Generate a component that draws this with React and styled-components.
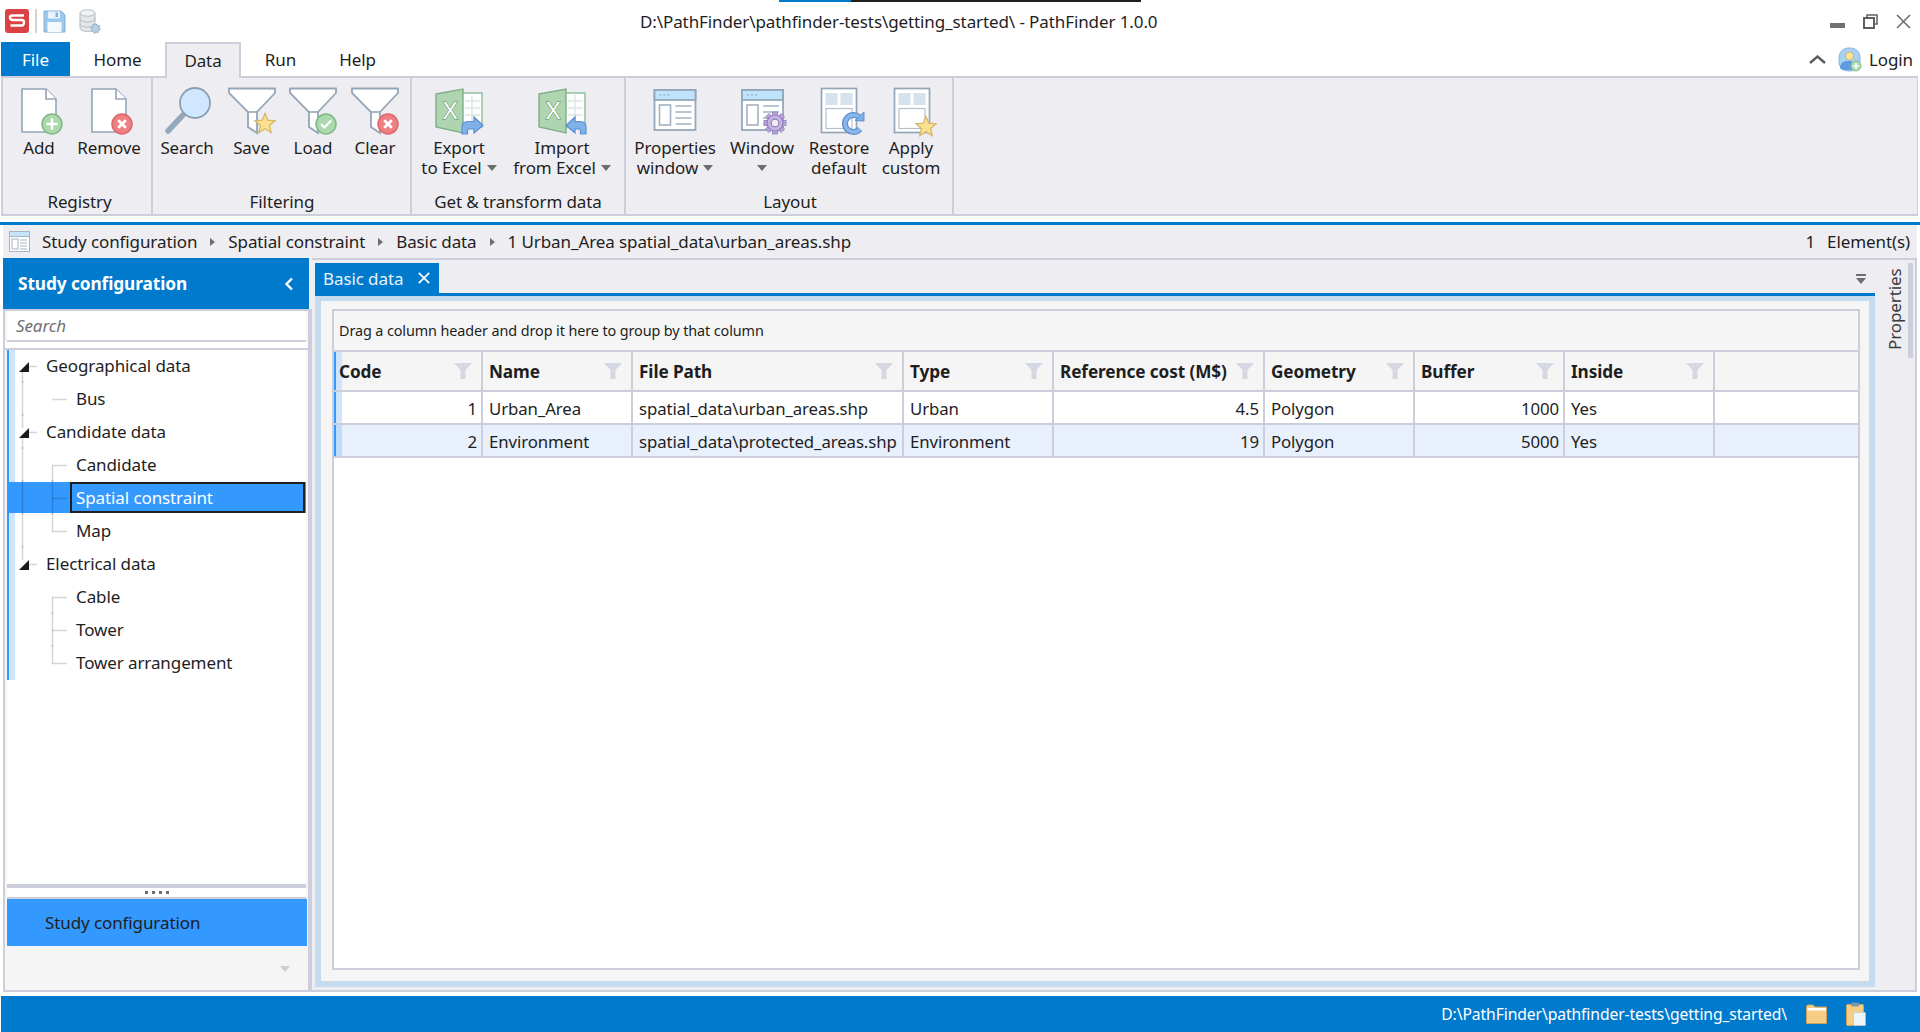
import styled, { createGlobalStyle } from 'styled-components'

const GlobalStyle = createGlobalStyle`
    html, body {
        margin: 0;
        padding: 0;
        background: #fff;
    }
    * {
        box-sizing: border-box;
    }
`

const FONT = `"Noto Sans", "Open Sans", sans-serif`

/* ---------- icons ---------- */

const Badge = ({ kind, cx = 43, cy = 38 }) => {
    if (kind === 'star') return <Star cx={cx} cy={cy} />
    const fill = kind === 'remove' ? '#f07f83' : '#acd8ae'
    const stroke = kind === 'remove' ? '#d9676b' : '#7fb884'
    return (
        <g>
            <circle cx={cx} cy={cy} r="10" fill={fill} stroke={stroke} strokeWidth="1.5" />
            {kind === 'add' && <path d={`M${cx - 5.5} ${cy}H${cx + 5.5}M${cx} ${cy - 5.5}V${cy + 5.5}`} stroke="#fff" strokeWidth="2.6" />}
            {kind === 'remove' && <path d={`M${cx - 3.8} ${cy - 3.8}L${cx + 3.8} ${cy + 3.8}M${cx + 3.8} ${cy - 3.8}L${cx - 3.8} ${cy + 3.8}`} stroke="#fff" strokeWidth="2.8" />}
            {kind === 'check' && <path d={`M${cx - 5} ${cy}L${cx - 1.5} ${cy + 3.5}L${cx + 5} ${cy - 3.5}`} stroke="#fff" strokeWidth="2.2" fill="none" />}
        </g>
    )
}

const Star = ({ cx, cy, r = 10.5 }) => {
    const pts = []
    for (let i = 0; i < 10; i++) {
        const rad = i % 2 === 0 ? r : r * 0.45
        const a = -Math.PI / 2 + (i * Math.PI) / 5
        pts.push(`${(cx + rad * Math.cos(a)).toFixed(1)},${(cy + rad * Math.sin(a)).toFixed(1)}`)
    }
    return <polygon points={pts.join(' ')} fill="#fbe08e" stroke="#d4b76a" strokeWidth="1.3" />
}

const IconBox = ({ children }) => (
    <svg width="60" height="52" viewBox="0 0 60 52">{children}</svg>
)

const DocIcon = ({ badge }) => (
    <IconBox>
        <path d="M13 3H37L47 13V46H13Z" fill="#fff" stroke="#94a5b7" strokeWidth="1.6" />
        <path d="M37 3V13H47" fill="#fff" stroke="#94a5b7" strokeWidth="1.6" />
        <Badge kind={badge} />
    </IconBox>
)

const SearchIcon = () => (
    <IconBox>
        <path d="M26 29L11 45" stroke="#94a9ba" strokeWidth="5.5" strokeLinecap="round" />
        <circle cx="38" cy="17" r="15" fill="#cfe8ff" stroke="#8b9fb3" strokeWidth="1.8" />
    </IconBox>
)

const FunnelIcon = ({ badge }) => (
    <IconBox>
        <path d="M7 2.5H53V7L35 26V47L26 41V26L7 7Z" fill="#fff" stroke="#94a5b7" strokeWidth="1.8" />
        <path d="M26 26H35" stroke="#94a5b7" strokeWidth="1.6" />
        <Badge kind={badge} />
    </IconBox>
)

const ExcelIcon = ({ direction }) => (
    <IconBox>
        <rect x="30" y="7" width="23" height="34" fill="#fff" stroke="#8fc2a0" strokeWidth="1.5" />
        <path d="M36 15H51M36 22H51M36 29H51M43 9V38" stroke="#dce8e2" strokeWidth="1.5" />
        <path d="M7 8L34 3V47L7 41Z" fill="#afd5b0" stroke="#7fae8a" strokeWidth="1.4" />
        <ExcelMark x="21" y="33">X</ExcelMark>
        {direction === 'out'
            ? <path d="M33 48V41Q33 35.500 39 35.500H45V31L54 39.500L45 47V43H40Q38.500 43 38.500 45V48Z" fill="#7fb0e8" stroke="#5a8fd0" strokeWidth="1.2" />
            : <path d="M54 48V41Q54 35.500 48 35.500H43V31L34 39.500L43 47V43H47Q48.500 43 48.500 45V48Z" fill="#7fb0e8" stroke="#5a8fd0" strokeWidth="1.2" />}
    </IconBox>
)

const ExcelMark = styled.text`
    font-family: "Liberation Sans", sans-serif;
    font-size: 23px;
    fill: #fff;
    stroke: #4f8a5c;
    stroke-width: 1px;
    paint-order: stroke;
    text-anchor: middle;
`

const WindowBody = ({ x }) => (
    <g>
        <rect x={x} y="4" width="41" height="40" fill="#fff" stroke="#93a7ba" strokeWidth="1.8" />
        <rect x={x} y="4" width="41" height="10" fill="#bfe3fb" stroke="#93a7ba" strokeWidth="1.8" />
        <path d={`M${x + 5} 9H${x + 7}M${x + 9} 9H${x + 11}M${x + 13} 9H${x + 15}`} stroke="#8ea4b8" strokeWidth="1.2" />
        <rect x={x + 5} y="19" width="11" height="20" fill="#fff" stroke="#a2b2c1" strokeWidth="1.6" />
        <path d={`M${x + 21} 20H${x + 37}M${x + 21} 26H${x + 37}M${x + 21} 32H${x + 37}M${x + 21} 38H${x + 37}`} stroke="#a2b2c1" strokeWidth="1.6" />
    </g>
)

const PropertiesIcon = () => (
    <IconBox>
        <WindowBody x={9.500} />
    </IconBox>
)

const WindowIcon = () => {
    const teeth = [0, 45, 90, 135].map(a => (
        <rect key={a} x="40.500" y="26" width="5" height="22" fill="#b9a6d6" stroke="#917fc0" strokeWidth="0.8" transform={`rotate(${a} 43 37)`} />
    ))
    return (
        <IconBox>
            <WindowBody x={10} />
            {teeth}
            <circle cx="43" cy="37" r="8" fill="#c3b3df" stroke="#917fc0" strokeWidth="1.2" />
            <circle cx="43" cy="37" r="3.800" fill="#eeeef2" stroke="#917fc0" strokeWidth="1.2" />
        </IconBox>
    )
}

const LayoutDoc = ({ x }) => (
    <g>
        <rect x={x} y="2.500" width="35" height="44" fill="#fff" stroke="#94a5b7" strokeWidth="1.700" />
        <rect x={x + 4} y="7" width="12" height="12" fill="#d6e3ee" />
        <rect x={x + 19} y="7" width="12" height="12" fill="#d6e3ee" />
        <rect x={x + 4.500} y="22.500" width="26" height="20" fill="#fff" stroke="#b4c1cd" strokeWidth="1.200" />
    </g>
)

const RestoreIcon = () => (
    <IconBox>
        <LayoutDoc x={12.500} />
        <path d="M50 31A8.500 8.500 0 1 0 51 43" fill="none" stroke="#5a8fd0" strokeWidth="6" />
        <path d="M50 31A8.500 8.500 0 1 0 51 43" fill="none" stroke="#8ab6ea" strokeWidth="3.600" />
        <path d="M46 34.500L55 35V26Z" fill="#7fb0e8" stroke="#5a8fd0" strokeWidth="1" />
    </IconBox>
)

const ApplyIcon = () => (
    <IconBox>
        <LayoutDoc x={13.500} />
        <Star cx={45} cy={41} />
    </IconBox>
)

const LogoIcon = () => (
    <svg width="24" height="24" viewBox="0 0 24 24">
        <rect width="24" height="24" rx="3" fill="#dc4146" />
        <path d="M19 6.500H7.500Q5 6.500 5 8.500T7.500 11H17Q19 11 19 13.500T17 16.500H5.500" fill="none" stroke="#fff" strokeWidth="2.400" />
    </svg>
)

const SaveIcon = () => (
    <svg width="23" height="23" viewBox="0 0 23 23">
        <path d="M1 1H18L22 5V22H1Z" fill="#9cc8ec" stroke="#7fb0da" />
        <rect x="5" y="1.500" width="12" height="7" fill="#e8f3fb" />
        <rect x="12.500" y="2.500" width="2.500" height="4.500" fill="#7fb0da" />
        <rect x="4.500" y="12" width="14" height="10" fill="#f4f9fd" />
    </svg>
)

const DatabaseIcon = () => (
    <svg width="22" height="25" viewBox="0 0 22 25">
        <path d="M1 4V19C1 21 4 22.500 8.500 22.500S16 21 16 19V4Z" fill="#e4e7ea" stroke="#b5babe" />
        <ellipse cx="8.500" cy="4" rx="7.500" ry="3.200" fill="#f1f2f4" stroke="#b5babe" />
        <path d="M1 9.500C1 11.500 4 13 8.500 13S16 11.500 16 9.500M1 14.500C1 16.500 4 18 8.500 18S16 16.500 16 14.500" fill="none" stroke="#b5babe" />
        <circle cx="16.500" cy="19.500" r="4.200" fill="#b6cfe2" stroke="#93b3cc" strokeWidth="1.800" strokeDasharray="2 1.200" />
    </svg>
)

const MinimizeIcon = () => (
    <svg width="15" height="15" viewBox="0 0 15 15"><rect y="9" width="15" height="5" fill="#717171" /></svg>
)

const RestoreWindowIcon = () => (
    <svg width="15" height="15" viewBox="0 0 15 15">
        <path d="M4 3V1H14V10H11.500" fill="none" stroke="#5f5f5f" strokeWidth="1.500" />
        <rect x="1" y="4" width="10" height="10" fill="none" stroke="#5f5f5f" strokeWidth="2" />
    </svg>
)

const CloseIcon = ({ size = 15, color = '#6a6a6a', weight = 1.500 }) => (
    <svg width={size} height={size} viewBox="0 0 15 15">
        <path d="M1 1L14 14M14 1L1 14" stroke={color} strokeWidth={weight} />
    </svg>
)

const ChevronUp = () => (
    <svg width="17" height="9" viewBox="0 0 17 9"><path d="M1 8L8.500 1.500L16 8" fill="none" stroke="#5c5c5c" strokeWidth="2.400" /></svg>
)

const UserIcon = () => (
    <svg width="24" height="25" viewBox="0 0 24 25">
        <rect x="1" y="1" width="21" height="23" rx="9" fill="#a7d0f2" stroke="#8cb8dc" />
        <circle cx="11.500" cy="9" r="4" fill="#fbe7a0" stroke="#cdb568" />
        <path d="M2 20C3 14 8 14 11.500 14S16 16 16 23H6Q2 23 2 20Z" fill="#5e9be0" />
        <circle cx="18" cy="19" r="5" fill="#acd8ae" stroke="#8cc492" />
        <path d="M15 19H21M18 16V22" stroke="#fff" strokeWidth="1.600" />
    </svg>
)

const PanelIcon = () => (
    <svg width="21" height="21" viewBox="0 0 21 21">
        <rect x="0.500" y="0.500" width="20" height="20" fill="#fff" stroke="#a6b5c3" />
        <rect x="0.500" y="0.500" width="20" height="5" fill="#c5e5fb" stroke="#a6b5c3" />
        <rect x="3" y="8" width="6" height="10" fill="#fff" stroke="#a6b5c3" />
        <path d="M11 9H18M11 12H18M11 15H18M11 18H18" stroke="#a6b5c3" />
    </svg>
)

const FilterGlyph = () => (
    <svg width="18" height="16" viewBox="0 0 18 16"><path d="M0 0H18L11.500 7V16H6.500V7Z" fill="#d5d7e3" /></svg>
)

const FolderIcon = () => (
    <svg width="21" height="20" viewBox="0 0 21 20">
        <path d="M0.500 2.500Q0.500 1 2 1H7L9 3H20.500V19.500H0.500Z" fill="#f5cd85" stroke="#c9a461" />
        <rect x="1.500" y="4" width="18.500" height="2.500" fill="#fff" />
    </svg>
)

const ClipboardIcon = () => (
    <svg width="20" height="24" viewBox="0 0 20 24">
        <rect x="0.500" y="2.500" width="17" height="21" rx="1" fill="#f5cd85" stroke="#c9a461" />
        <rect x="5" y="0.500" width="8" height="4" rx="1" fill="#7d97ab" />
        <rect x="7.500" y="10.500" width="12" height="13" fill="#eef4fb" stroke="#b6c4d2" strokeDasharray="1.500 1" />
    </svg>
)

/* ---------- data ---------- */

const ribbonGroups = [
    {
        title: 'Registry', width: 150, shift: 5, items: [
            { w: 72, lines: ['Add'], icon: <DocIcon badge="add" /> },
            { w: 68, lines: ['Remove'], icon: <DocIcon badge="remove" /> },
        ]
    },
    {
        title: 'Filtering', width: 259, shift: 1, items: [
            { w: 68, lines: ['Search'], icon: <SearchIcon /> },
            { w: 61, lines: ['Save'], icon: <FunnelIcon badge="star" /> },
            { w: 62, lines: ['Load'], icon: <FunnelIcon badge="check" /> },
            { w: 62, lines: ['Clear'], icon: <FunnelIcon badge="remove" /> },
        ]
    },
    {
        title: 'Get & transform data', width: 214, shift: 0, items: [
            { w: 94, lines: ['Export', 'to Excel'], caret: true, icon: <ExcelIcon direction="out" /> },
            { w: 112, lines: ['Import', 'from Excel'], caret: true, icon: <ExcelIcon direction="in" /> },
        ]
    },
    {
        title: 'Layout', width: 328, shift: 2, items: [
            { w: 98, lines: ['Properties', 'window'], caret: true, icon: <PropertiesIcon /> },
            { w: 76, lines: ['Window', ''], caret: true, icon: <WindowIcon /> },
            { w: 78, lines: ['Restore', 'default'], icon: <RestoreIcon /> },
            { w: 66, lines: ['Apply', 'custom'], icon: <ApplyIcon /> },
        ]
    },
]

const crumbs = ['Study configuration', 'Spatial constraint', 'Basic data', '1 Urban_Area spatial_data\\urban_areas.shp']

const treeRows = [
    { label: 'Geographical data', depth: 0, main: 'start' },
    { label: 'Bus', depth: 1, main: 'full' },
    { label: 'Candidate data', depth: 0, main: 'mid' },
    { label: 'Candidate', depth: 1, main: 'full', branch: 'first' },
    { label: 'Spatial constraint', depth: 1, main: 'full', branch: 'mid', selected: true },
    { label: 'Map', depth: 1, main: 'full', branch: 'last' },
    { label: 'Electrical data', depth: 0, main: 'end' },
    { label: 'Cable', depth: 1, branch: 'first' },
    { label: 'Tower', depth: 1, branch: 'mid' },
    { label: 'Tower arrangement', depth: 1, branch: 'last' },
]

const columns = [
    { title: 'Code', key: 'code', numeric: true },
    { title: 'Name', key: 'name' },
    { title: 'File Path', key: 'path' },
    { title: 'Type', key: 'type' },
    { title: 'Reference cost (M$)', key: 'cost', numeric: true },
    { title: 'Geometry', key: 'geometry' },
    { title: 'Buffer', key: 'buffer', numeric: true },
    { title: 'Inside', key: 'inside' },
]

const rows = [
    { code: 1, name: 'Urban_Area', path: 'spatial_data\\urban_areas.shp', type: 'Urban', cost: 4.5, geometry: 'Polygon', buffer: 1000, inside: 'Yes' },
    { code: 2, name: 'Environment', path: 'spatial_data\\protected_areas.shp', type: 'Environment', cost: 19, geometry: 'Polygon', buffer: 5000, inside: 'Yes' },
]

/* ---------- parts ---------- */

const TreeGuides = ({ row }) => {
    const isRoot = row.depth === 0
    const h = 33
    return (
        <GuideSvg width={isRoot ? 25 : 55} height="31" $root={isRoot}>
            {row.main === 'full' && <GuideLine d={`M7.500 -2V${h}`} />}
            {(row.main === 'start' || row.main === 'mid') && <GuideLine d={`M7.500 20V${h}`} />}
            {row.main === 'mid' && <GuideLine d="M7.500 -2V12" />}
            {row.main === 'end' && <GuideLine d="M7.500 -2V12" />}
            {isRoot && <GuideLine d="M14 16.500H22" />}
            {isRoot && <polygon points="14,12 14,22 4,22" fill="#1c1c1c" />}
            {!isRoot && <GuideLine d="M37 16.500H52" />}
            {row.branch === 'first' && <GuideLine d={`M37.500 16.500V${h}`} />}
            {row.branch === 'mid' && <GuideLine d={`M37.500 -2V${h}`} />}
            {row.branch === 'last' && <GuideLine d="M37.500 -2V16.500" />}
        </GuideSvg>
    )
}

const RibbonButton = ({ item }) => (
    <RibbonItem $w={item.w}>
        {item.icon}
        {item.lines.map((line, i) => (
            <RibbonLine key={i}>
                {line}
                {item.caret && i === item.lines.length - 1 && <Caret $spaced={line !== ''} />}
            </RibbonLine>
        ))}
    </RibbonItem>
)

const App = () => {
    return (
        <Page>
            <GlobalStyle />
            <LoadingBar />
            <TitleBar>
                <QuickAccess>
                    <LogoIcon />
                    <QuickSep />
                    <SaveIcon />
                    <DbSlot><DatabaseIcon /></DbSlot>
                </QuickAccess>
                <WindowTitle>D:\PathFinder\pathfinder-tests\getting_started\ - PathFinder 1.0.0</WindowTitle>
                <WindowControls>
                    <MinimizeIcon />
                    <RestoreWindowIcon />
                    <CloseIcon />
                </WindowControls>
            </TitleBar>

            <TabRow>
                <FileTab>File</FileTab>
                <MenuTab $w={95}>Home</MenuTab>
                <MenuTab $w={76} $active>Data</MenuTab>
                <MenuTab $w={79}>Run</MenuTab>
                <MenuTab $w={75}>Help</MenuTab>
                <AccountArea>
                    <ChevronUp />
                    <UserIcon />
                    <LoginText>Login</LoginText>
                </AccountArea>
            </TabRow>

            <Ribbon>
                {ribbonGroups.map(group => (
                    <RibbonGroup key={group.title} $w={group.width}>
                        <RibbonItems>
                            {group.items.map((item, i) => <RibbonButton key={i} item={item} />)}
                        </RibbonItems>
                        <GroupTitle $shift={group.shift}>{group.title}</GroupTitle>
                    </RibbonGroup>
                ))}
            </Ribbon>

            <BlueRule />

            <Breadcrumb>
                <CrumbIcon><PanelIcon /></CrumbIcon>
                {crumbs.map((crumb, i) => (
                    <Crumb key={crumb}>
                        {i > 0 && <CrumbArrow />}
                        {crumb}
                    </Crumb>
                ))}
                <ElementCount>
                    <span>1</span>
                    <span>Element(s)</span>
                </ElementCount>
            </Breadcrumb>

            <Workspace>
                <Sidebar>
                    <SidebarHeader>
                        <SidebarTitle>Study configuration</SidebarTitle>
                        <svg width="10" height="14" viewBox="0 0 10 14"><path d="M8 1.500L2.500 7L8 12.500" fill="none" stroke="#fff" strokeWidth="2.400" /></svg>
                    </SidebarHeader>
                    <SidebarBody>
                        <SearchField>Search</SearchField>
                        <SearchGap />
                        <Tree>
                            {treeRows.map(row => (
                                <TreeRow key={row.label} $selected={row.selected}>
                                    <TreeGuides row={row} />
                                    <TreeLabel $selected={row.selected}>{row.label}</TreeLabel>
                                </TreeRow>
                            ))}
                        </Tree>
                        <Grip>
                            <GripDot /><GripDot /><GripDot /><GripDot />
                        </Grip>
                        <NavItem>Study configuration</NavItem>
                        <NavFooter><FooterCaret /></NavFooter>
                    </SidebarBody>
                </Sidebar>

                <Main>
                    <DockArea>
                        <DocTabs>
                            <DocTab>
                                Basic data
                                <CloseIcon size={12} color="#fff" weight={2.200} />
                            </DocTab>
                            <TabMenuButton />
                        </DocTabs>
                        <Frame>
                            <Grid>
                                <GroupPanel>Drag a column header and drop it here to group by that column</GroupPanel>
                                <GridRow $header>
                                    {columns.map(col => (
                                        <HeaderCell key={col.key}>
                                            {col.title}
                                            <FilterGlyph />
                                        </HeaderCell>
                                    ))}
                                    <HeaderCell $filler />
                                </GridRow>
                                {rows.map((row, i) => (
                                    <GridRow key={row.code} $selected={i === 1}>
                                        {columns.map(col => (
                                            <Cell key={col.key} $numeric={col.numeric}>{row[col.key]}</Cell>
                                        ))}
                                        <Cell $filler />
                                    </GridRow>
                                ))}
                            </Grid>
                        </Frame>
                    </DockArea>
                    <PropertiesStrip>
                        <PropertiesLabel>Properties</PropertiesLabel>
                        <PropertiesBar />
                    </PropertiesStrip>
                </Main>
            </Workspace>

            <StatusBar>
                <StatusPath>D:\PathFinder\pathfinder-tests\getting_started\</StatusPath>
                <FolderIcon />
                <ClipboardIcon />
            </StatusBar>
        </Page>
    )
}

export default App

const Page = styled.div`
    position: relative;
    width: 1920px;
    height: 1032px;
    overflow: hidden;
    display: flex;
    flex-direction: column;
    background: #fff;
    font-family: ${FONT};
    font-size: 17px;
    letter-spacing: -0.1px;
    color: #1e1e1e;
`

const LoadingBar = styled.div`
    position: absolute;
    top: 0;
    left: 779px;
    width: 362px;
    height: 2px;
    background: linear-gradient(90deg, #007acc 72px, #1f1f1f 72px);
`

const TitleBar = styled.div`
    height: 42px;
    display: flex;
    align-items: center;
`

const QuickAccess = styled.div`
    width: 640px;
    padding-left: 5px;
    display: flex;
    align-items: center;
`

const QuickSep = styled.div`
    width: 2px;
    height: 24px;
    margin: 0 6px;
    background: #d2d2d2;
`

const DbSlot = styled.div`
    display: flex;
    margin-left: 13px;
`

const WindowTitle = styled.div`
    white-space: nowrap;
`

const WindowControls = styled.div`
    margin-left: auto;
    padding-right: 9px;
    display: flex;
    gap: 18px;
    align-items: center;
`

const TabRow = styled.div`
    height: 34px;
    display: flex;
    align-items: flex-end;
    padding-left: 1px;
`

const FileTab = styled.div`
    width: 69px;
    height: 34px;
    background: #007acc;
    color: #fff;
    display: flex;
    align-items: center;
    justify-content: center;
`

const MenuTab = styled.div`
    width: ${p => p.$w}px;
    height: ${p => (p.$active ? '36px' : '34px')};
    margin-bottom: ${p => (p.$active ? '-2px' : '0')};
    display: flex;
    align-items: center;
    justify-content: center;
    position: relative;
    z-index: 1;
    padding-bottom: ${p => (p.$active ? '2px' : '0')};
    background: ${p => (p.$active ? '#eeeef2' : 'transparent')};
    border: ${p => (p.$active ? '2px solid #cccedb' : 'none')};
    border-bottom: none;
`

const AccountArea = styled.div`
    margin-left: auto;
    height: 34px;
    padding-right: 7px;
    display: flex;
    align-items: center;
    gap: 12px;
`

const LoginText = styled.span`
    margin-left: -5px;
`

const Ribbon = styled.div`
    height: 140px;
    margin: 0 2px 0 1px;
    flex-shrink: 0;
    display: flex;
    background: #eeeef2;
    border: 2px solid #cccedb;
    border-right-width: 1px;
`

const RibbonGroup = styled.div`
    width: ${p => p.$w}px;
    display: flex;
    flex-direction: column;
    border-right: 2px solid #cccedb;
`

const RibbonItems = styled.div`
    flex: 1;
    display: flex;
    padding-top: 8px;
`

const RibbonItem = styled.div`
    width: ${p => p.$w}px;
    display: flex;
    flex-direction: column;
    align-items: center;
`

const RibbonLine = styled.div`
    height: 20px;
    line-height: 20px;
    display: flex;
    align-items: center;
    white-space: nowrap;
`

const Caret = styled.span`
    display: inline-block;
    margin-left: ${p => (p.$spaced ? '5px' : '0')};
    border-left: 5px solid transparent;
    border-right: 5px solid transparent;
    border-top: 6px solid #6d6d6d;
`

const GroupTitle = styled.div`
    height: 21px;
    line-height: 20px;
    margin-bottom: 1px;
    padding-left: ${p => p.$shift}px;
    text-align: center;
`

const BlueRule = styled.div`
    height: 3px;
    margin-top: 6px;
    flex-shrink: 0;
    background: #007acc;
`

const Breadcrumb = styled.div`
    height: 33px;
    margin: 0 3px;
    flex-shrink: 0;
    display: flex;
    align-items: center;
    background: #eeeef2;
`

const CrumbIcon = styled.div`
    display: flex;
    margin: 0 12px 0 6px;
`

const Crumb = styled.div`
    display: flex;
    align-items: center;
    white-space: nowrap;
`

const CrumbArrow = styled.span`
    margin: 0 13px;
    border-top: 4px solid transparent;
    border-bottom: 4px solid transparent;
    border-left: 5px solid #6d6d6d;
`

const ElementCount = styled.div`
    margin-left: auto;
    padding-right: 7px;
    display: flex;
    gap: 12px;
`

const Workspace = styled.div`
    flex: 1;
    min-height: 0;
    display: flex;
    padding: 0 3px 4px;
`

const Sidebar = styled.div`
    width: 309px;
    flex-shrink: 0;
    display: flex;
    flex-direction: column;
    background: #eeeef2;
`

const SidebarHeader = styled.div`
    height: 51px;
    flex-shrink: 0;
    padding: 0 15px;
    margin-right: 3px;
    display: flex;
    align-items: center;
    justify-content: space-between;
    background: #007acc;
    color: #fff;
`

const SidebarTitle = styled.span`
    font-weight: 700;
    font-size: 17.300px;
`

const SidebarBody = styled.div`
    flex: 1;
    min-height: 0;
    display: flex;
    flex-direction: column;
    background: #f5f5f5;
    border: solid #cccedb;
    border-width: 2px 4px 2px 2px;
`

const SearchField = styled.div`
    height: 31px;
    margin: 0 2px 0 2px;
    padding-left: 9px;
    flex-shrink: 0;
    display: flex;
    align-items: center;
    background: #fff;
    border-bottom: 2px solid #cccedb;
    font-style: italic;
    color: #717171;
`

const SearchGap = styled.div`
    height: 8px;
    flex-shrink: 0;
    background: #fff;
    border-bottom: 2px solid #cccedb;
`

const Tree = styled.div`
    flex: 1;
    min-height: 0;
    margin: 0 2px;
    background: #fff;
`

const TreeRow = styled.div`
    height: 31px;
    margin-bottom: 2px;
    display: flex;
    align-items: stretch;
    background: ${p => (p.$selected ? '#3399ff' : 'transparent')};
    border-left: 8px solid ${p => (p.$selected ? '#3399ff' : '#cfe5ff')};
    box-shadow: ${p => (p.$selected ? 'none' : '0 2px 0 #fff')};
    position: relative;
    &::before {
        content: '';
        position: absolute;
        left: -8px;
        top: 0;
        bottom: -2px;
        width: 2px;
        background: #3399ff;
    }
    &::after {
        content: '';
        position: absolute;
        left: -6px;
        top: 31px;
        height: 2px;
        width: 6px;
        background: #cfe5ff;
    }
`

const GuideSvg = styled.svg`
    flex-shrink: 0;
    overflow: visible;
`

const GuideLine = styled.path`
    stroke: rgba(0, 0, 0, 0.16);
    stroke-width: 1.500;
    fill: none;
`

const TreeLabel = styled.div`
    flex: 1;
    padding: 0 0 0 4px;
    margin-right: 1px;
    display: flex;
    align-items: center;
    border: 2px solid ${p => (p.$selected ? '#1f1f1f' : 'transparent')};
    color: ${p => (p.$selected ? '#fff' : 'inherit')};
`

const Grip = styled.div`
    height: 15px;
    margin: 0 2px;
    flex-shrink: 0;
    display: flex;
    gap: 4px;
    align-items: center;
    justify-content: center;
    background: #fff;
    border: solid #cccedb;
    border-width: 4px 0 2px;
`

const GripDot = styled.span`
    width: 3px;
    height: 3px;
    background: #6d6d6d;
`

const NavItem = styled.div`
    height: 47px;
    margin: 0 1px 0 2px;
    padding-left: 38px;
    flex-shrink: 0;
    display: flex;
    align-items: center;
    background: #3399ff;
`

const NavFooter = styled.div`
    height: 44px;
    padding: 20px 0 0 275px;
    flex-shrink: 0;
`

const FooterCaret = styled.div`
    width: 0;
    border-left: 5px solid transparent;
    border-right: 5px solid transparent;
    border-top: 6px solid #cccedb;
`

const Main = styled.div`
    flex: 1;
    min-width: 0;
    display: flex;
    background: #eeeef2;
    border: solid #cccedb;
    border-width: 2px 2px 2px 0;
`

const DockArea = styled.div`
    width: 1560px;
    margin-left: 3px;
    padding-bottom: 3px;
    flex-shrink: 0;
    display: flex;
    flex-direction: column;
`

const DocTabs = styled.div`
    height: 36px;
    flex-shrink: 0;
    display: flex;
    justify-content: space-between;
    border-bottom: 3px solid #007acc;
    padding-top: 3px;
`

const DocTab = styled.div`
    width: 124px;
    padding: 0 9px 0 8px;
    display: flex;
    align-items: center;
    justify-content: space-between;
    background: #007acc;
    color: #e8f3fb;
`

const TabMenuButton = styled.div`
    align-self: center;
    width: 10px;
    height: 9px;
    margin-right: 9px;
    border-top: 2px solid #6d6d6d;
    position: relative;
    &::after {
        content: '';
        position: absolute;
        left: 0;
        top: 2px;
        border-left: 5px solid transparent;
        border-right: 5px solid transparent;
        border-top: 6px solid #6d6d6d;
    }
`

const Frame = styled.div`
    flex: 1;
    min-height: 0;
    display: flex;
    background: #f5f5f5;
    border: solid #c5dcee;
    border-width: 5px 6px 6px 6px;
    padding: 8px 9px 11px 11px;
`

const Grid = styled.div`
    flex: 1;
    min-width: 0;
    background: #fff;
    border: 2px solid #cccedb;
`

const GroupPanel = styled.div`
    height: 39px;
    padding-left: 5px;
    display: flex;
    align-items: center;
    background: #f5f5f5;
    font-size: 14.400px;
`

const GridRow = styled.div`
    display: grid;
    grid-template-columns: 149px 150px 271px 150px 211px 150px 150px 150px 1fr;
    height: ${p => (p.$header ? '42px' : '33px')};
    background: ${p => (p.$header ? '#f5f5f5' : p.$selected ? '#e7f0fb' : '#fff')};
    border-top: ${p => (p.$header ? '2px solid #cccedb' : 'none')};
    border-bottom: 2px solid #cccedb;
    & > div:first-child {
        padding-left: 5px;
        background-image: linear-gradient(90deg, #3399ff 2px, ${p => (p.$selected ? '#bfdcfd' : '#cfe5ff')} 2px, ${p => (p.$selected ? '#bfdcfd' : '#cfe5ff')} 8px, transparent 8px);
    }
`

const HeaderCell = styled.div`
    padding: 0 9px 0 6px;
    display: flex;
    align-items: center;
    justify-content: space-between;
    border-right: ${p => (p.$filler ? 'none' : '2px solid #cccedb')};
    font-weight: 700;
    font-size: 17.200px;
    white-space: nowrap;
`

const Cell = styled.div`
    padding: 2px 4px 0 6px;
    display: flex;
    align-items: center;
    justify-content: ${p => (p.$numeric ? 'flex-end' : 'flex-start')};
    border-right: ${p => (p.$filler ? 'none' : '2px solid #cccedb')};
    font-size: 16.800px;
    white-space: nowrap;
`

const PropertiesStrip = styled.div`
    flex: 1;
    padding: 3px 5px 0 10px;
    display: flex;
    align-items: flex-start;
    gap: 3px;
`

const PropertiesLabel = styled.div`
    writing-mode: vertical-rl;
    transform: rotate(180deg);
    height: 87px;
    line-height: 20px;
    text-align: left;
    color: #3b3b3b;
`

const PropertiesBar = styled.div`
    width: 5px;
    height: 95px;
    background: #cccedb;
`

const StatusBar = styled.div`
    height: 36px;
    margin-left: 1px;
    flex-shrink: 0;
    display: flex;
    align-items: center;
    justify-content: flex-end;
    gap: 19px;
    padding-right: 54px;
    background: #007acc;
    color: #fff;
`

const StatusPath = styled.span`
    font-size: 15.700px;
`
